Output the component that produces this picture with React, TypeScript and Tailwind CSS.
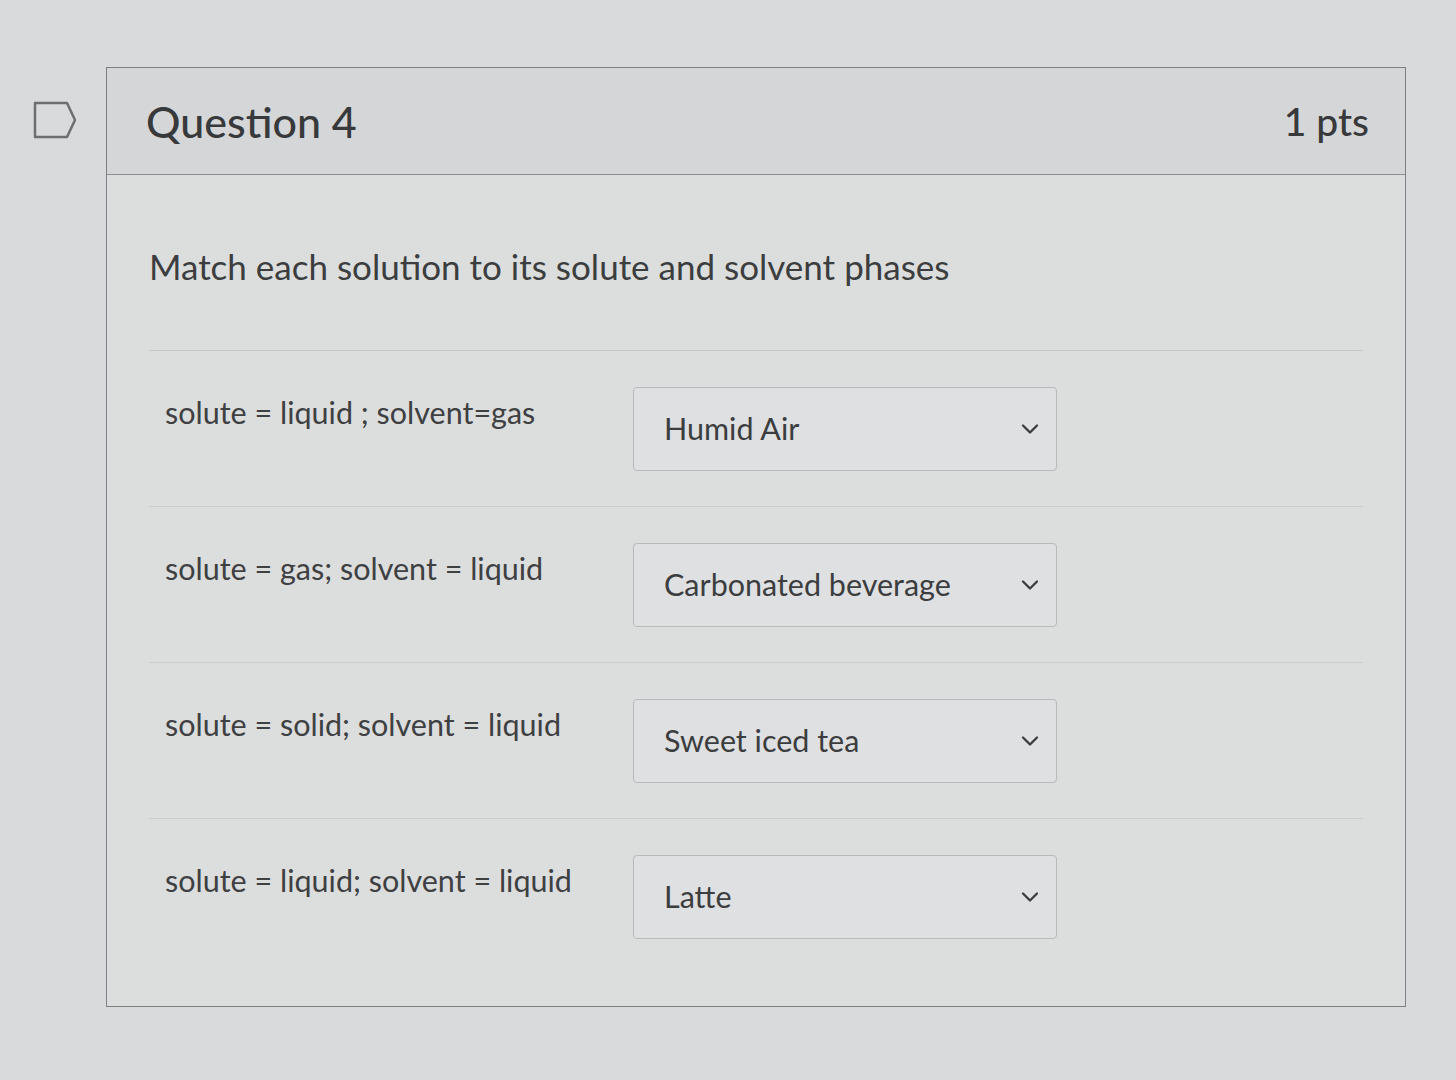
import { ChevronDown } from 'lucide-react'

const rows = [
  { label: 'solute = liquid ; solvent=gas', value: 'Humid Air' },
  { label: 'solute = gas; solvent = liquid', value: 'Carbonated beverage' },
  { label: 'solute = solid; solvent = liquid', value: 'Sweet iced tea' },
  { label: 'solute = liquid; solvent = liquid', value: 'Latte' },
]

function Flag() {
  return (
    <svg width="44" height="38" viewBox="0 0 44 38" className="shrink-0">
      <path d="M2 2 H34 L42 19 L34 36 H2 Z" fill="none" stroke="#6b6f72" strokeWidth="2.5" strokeLinejoin="round" />
    </svg>
  )
}

export default function App() {
  return (
    <div
      className="min-h-[1080px] w-[1456px] bg-[#d9dadb] text-[#37393b] overflow-hidden"
      style={{ fontFamily: 'Lato, "Open Sans", sans-serif' }}
    >
      <div className="h-[67px]" />
      <div className="flex items-start">
        <div className="w-[106px] pl-[33px] pt-[34px]">
          <Flag />
        </div>
        <div className="w-[1300px] border border-[#7d8082] bg-[#dcdddd]">
          {/* header */}
          <div className="h-[107px] flex items-center justify-between pl-[39px] pr-[36px] bg-[#d5d6d7] border-b border-[#8a8c8e]">
            <h2 className="text-[43px] leading-none font-medium">Question 4</h2>
            <span className="text-[39px] leading-none font-medium">1 pts</span>
          </div>
          {/* body */}
          <div className="px-[42px] pt-[70px] pb-[32px]">
            <p className="text-[35px] leading-[42px] text-[#3b3d3f]">Match each solution to its solute and solvent phases</p>
            <div className="mt-[63px] border-t border-[#c6c8c9]" />
            {rows.map((r, i) => (
              <div key={i}>
                <div className="flex items-start pt-[36px] pb-[35px]">
                  <div className="w-[484px] pl-[16px] pt-[6px] text-[30.5px] leading-[38px] text-[#3e4042]">{r.label}</div>
                  <div className="w-[424px] h-[84px] flex items-center justify-between pl-[30px] pr-[12px] rounded-[4px] border border-[#b7b9bb] bg-[#dfe0e1]">
                    <span className="text-[30.5px] text-[#3b3d3f]">{r.value}</span>
                    <ChevronDown className="w-[28px] h-[28px] text-[#3b3d3f]" strokeWidth={2} />
                  </div>
                </div>
                {i < rows.length - 1 && <div className="border-t border-[#c9cbcc]" />}
              </div>
            ))}
          </div>
        </div>
      </div>
    </div>
  )
}
